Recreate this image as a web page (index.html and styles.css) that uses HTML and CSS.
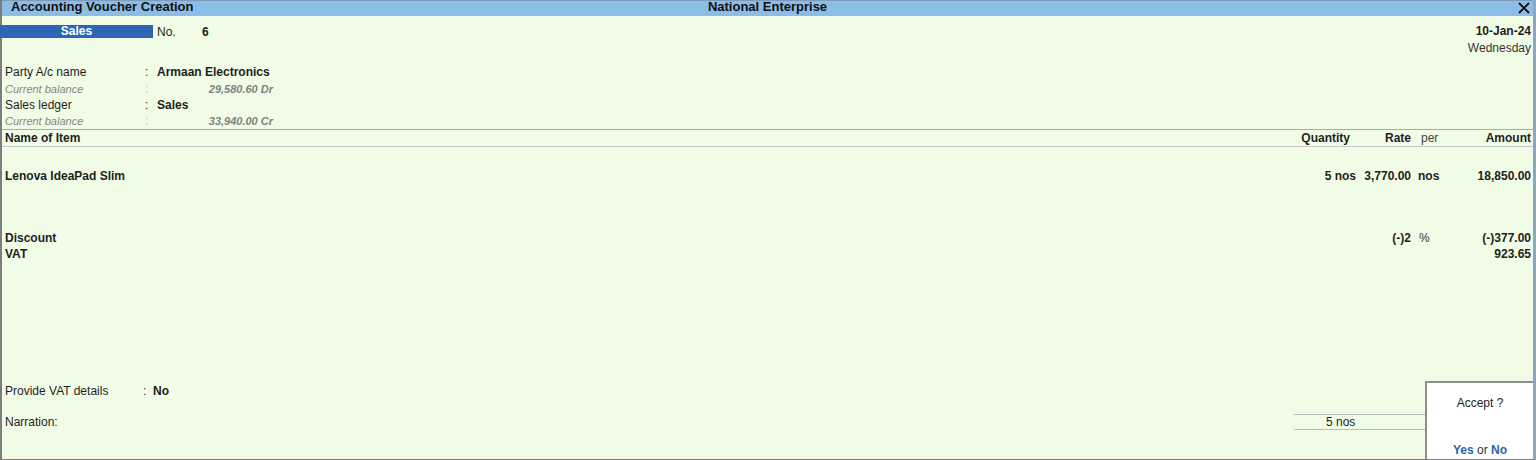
FILE: index.html
```html
<!DOCTYPE html>
<html>
<head>
<meta charset="utf-8">
<link rel="stylesheet" href="styles.css">
</head>
<body>
<div class="window">
  <div class="titlebar">
    <div class="title-left">Accounting Voucher Creation</div>
    <div class="title-center">National Enterprise</div>
    <div class="title-right">
      <svg class="close" width="12" height="12" viewBox="0 0 12 12"><path d="M1 1 L11 11 M11 1 L1 11" stroke="#111" stroke-width="1.8" fill="none"/></svg>
    </div>
  </div>
  <div class="content">
    <div class="top-row">
      <div class="vtype">
        <div class="sales-bar">Sales</div>
        <div class="no-label">No.</div>
        <div class="no-value">6</div>
      </div>
      <div class="date-block">
        <div class="date">10-Jan-24</div>
        <div class="day">Wednesday</div>
      </div>
    </div>

    <div class="party">
      <div class="prow"><span class="plabel">Party A/c name</span><span class="pcolon">:</span><span class="pvalue">Armaan Electronics</span></div>
      <div class="prow sub"><span class="plabel">Current balance</span><span class="pcolon">:</span><span class="pbal">29,580.60 Dr</span></div>
      <div class="prow"><span class="plabel">Sales ledger</span><span class="pcolon">:</span><span class="pvalue">Sales</span></div>
      <div class="prow sub"><span class="plabel">Current balance</span><span class="pcolon">:</span><span class="pbal">33,940.00 Cr</span></div>
    </div>

    <div class="items">
      <div class="row head">
        <div class="c-name">Name of Item</div>
        <div class="c-qty">Quantity</div>
        <div class="c-rate">Rate</div>
        <div class="c-per">per</div>
        <div class="c-amt">Amount</div>
      </div>
      <div class="row item">
        <div class="c-name">Lenova IdeaPad Slim</div>
        <div class="c-qty">5 nos</div>
        <div class="c-rate">3,770.00</div>
        <div class="c-per">nos</div>
        <div class="c-amt">18,850.00</div>
      </div>
      <div class="row ledger first">
        <div class="c-name">Discount</div>
        <div class="c-qty"></div>
        <div class="c-rate">(-)2</div>
        <div class="c-per pct">%</div>
        <div class="c-amt">(-)377.00</div>
      </div>
      <div class="row ledger">
        <div class="c-name">VAT</div>
        <div class="c-qty"></div>
        <div class="c-rate"></div>
        <div class="c-per"></div>
        <div class="c-amt">923.65</div>
      </div>
    </div>

    <div class="bottom">
      <div class="brow"><span class="blabel">Provide VAT details</span><span class="bcolon">:</span><span class="bvalue">No</span></div>
      <div class="brow narr">
        <span class="blabel">Narration:</span>
        <div class="total-box">5 nos</div>
      </div>
    </div>

    <div class="dialog">
      <div class="dq">Accept ?</div>
      <div class="da"><span class="yn">Yes</span> or <span class="yn">No</span></div>
    </div>
  </div>
</div>
</body>
</html>
```

FILE: styles.css
```css
* { box-sizing: border-box; }
html, body { margin: 0; padding: 0; }
body {
  width: 1536px;
  height: 460px;
  overflow: hidden;
  font-family: "Liberation Sans", Arial, sans-serif;
  font-size: 12px;
  color: #1e1e1e;
  background: #f1fce7;
}
.window {
  width: 1536px;
  height: 460px;
  display: flex;
  flex-direction: column;
  border-left: 2px solid #7d7d7d;
  border-right: 3px solid #8ea6c0;
  border-bottom: 1px solid #7d7d7d;
  background: #f1fce7;
}
.titlebar {
  height: 16px;
  flex: 0 0 16px;
  background: #8bbde6;
  border-top: 1px solid #7d9ab8;
  display: grid;
  grid-template-columns: 1fr auto 1fr;
  align-items: start;
  font-weight: bold;
  font-size: 13px;
  line-height: 12px;
  color: #111;
}
.title-left { padding-left: 9px; }
.title-center { text-align: center; }
.title-right { display: flex; justify-content: flex-end; padding-right: 3px; }
.close { display: block; margin-top: 1px; }

.content {
  position: relative;
  flex: 1;
  display: flex;
  flex-direction: column;
}
.top-row {
  display: flex;
  justify-content: space-between;
  align-items: flex-start;
  height: 48px;
}
.vtype {
  display: flex;
  align-items: center;
  margin-top: 9px;
  height: 13px;
}
.sales-bar {
  width: 153px;
  height: 13px;
  margin-left: -2px;
  background: #2c66b4;
  color: #fff;
  font-weight: bold;
  text-align: center;
  line-height: 13px;
}
.no-label { margin-left: 4px; width: 45px; }
.no-value { font-weight: bold; }
.date-block {
  text-align: right;
  padding-right: 2px;
  margin-top: 7px;
  line-height: 17px;
}
.date { font-weight: bold; }
.day { color: #333; }

.party { display: flex; flex-direction: column; }
.prow {
  display: flex;
  height: 16px;
  line-height: 16px;
  align-items: center;
}
.prow:nth-child(2) { height: 17px; }
.plabel { width: 143px; padding-left: 3px; }
.pcolon { width: 12px; }
.pvalue { font-weight: bold; }
.sub .plabel { font-style: italic; color: #858585; font-size: 11px; }
.sub .pcolon { color: #c4c4c4; }
.pbal {
  width: 116px;
  text-align: right;
  font-style: italic;
  font-weight: bold;
  color: #808080;
  font-size: 11px;
}

.items { flex: 1; margin-top: 0; }
.row {
  display: grid;
  grid-template-columns: 1fr 71px 55px 49px 71px;
  line-height: 16px;
  padding-right: 2px;
}
.row > div { white-space: nowrap; }
.c-name { padding-left: 3px; }
.c-qty, .c-rate, .c-amt { text-align: right; }
.c-per { padding-left: 7px; }
.head {
  border-top: 1px solid #a9a9a9;
  border-bottom: 1px solid #c8c8c8;
  height: 18px;
  font-weight: bold;
  margin-top: 0;
}
.head .c-qty { padding-right: 6px; }
.head .c-per { padding-left: 10px; font-weight: normal; color: #444; }
.item { margin-top: 21px; font-weight: bold; }
.ledger { font-weight: bold; }
.ledger.first { margin-top: 46px; }
.ledger .pct { font-weight: normal; padding-left: 8px; color: #333; }

.bottom {
  display: flex;
  flex-direction: column;
  padding-bottom: 29px;
}
.brow {
  display: flex;
  align-items: center;
  height: 16px;
  line-height: 16px;
}
.blabel { width: 141px; padding-left: 3px; }
.bcolon { width: 10px; }
.bvalue { font-weight: bold; }
.narr { margin-top: 15px; height: 16px; }
.narr .blabel { flex: 1; }
.total-box {
  width: 132px;
  height: 16px;
  margin-right: 107px;
  border-top: 1px solid #bdbdbd;
  border-bottom: 1px solid #bdbdbd;
  line-height: 14px;
  padding-left: 32px;
}

.dialog {
  position: absolute;
  right: 0;
  bottom: 0;
  width: 108px;
  height: 78px;
  background: #fff;
  border: 2px solid #8d8d8d;
  border-bottom: none;
  border-right: none;
  display: flex;
  flex-direction: column;
  justify-content: space-between;
  align-items: center;
  padding: 13px 0 2px;
}
.dq { color: #222; }
.da { color: #333; }
.yn { color: #2a63b0; font-weight: bold; }
```
